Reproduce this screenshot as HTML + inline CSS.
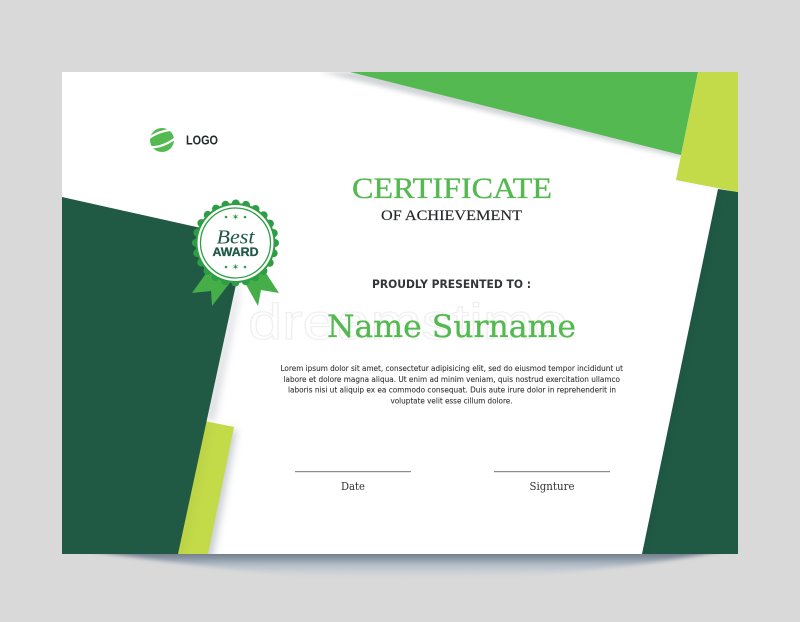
<!DOCTYPE html>
<html><head><meta charset="utf-8"><title>Certificate</title>
<style>html,body{margin:0;padding:0;background:#d9d9d9;width:800px;height:622px;overflow:hidden}svg{display:block}</style>
</head><body>
<svg width="800" height="622" viewBox="0 0 800 622" xmlns="http://www.w3.org/2000/svg">
<defs>
<filter id="b4" x="-30%" y="-30%" width="160%" height="160%"><feGaussianBlur stdDeviation="4"/></filter>
<filter id="b2" x="-30%" y="-30%" width="160%" height="160%"><feGaussianBlur stdDeviation="2.500"/></filter>
<filter id="soft" x="-5%" y="-30%" width="110%" height="160%"><feGaussianBlur stdDeviation="2"/></filter>
<clipPath id="card"><rect x="62" y="72" width="676" height="482"/></clipPath>
<clipPath id="lime"><polygon points="200,421 234,427 208,554 170,554"/></clipPath>
<clipPath id="darkr"><polygon points="718,189 738,192 738,554 642,554"/></clipPath>
<linearGradient id="sh" x1="0" y1="0" x2="0" y2="1">
<stop offset="0" stop-color="#59626e"/><stop offset=".3" stop-color="#83909e"/><stop offset=".55" stop-color="#b4bfc9"/><stop offset=".8" stop-color="#cfd3d7"/><stop offset="1" stop-color="#d9d9d9"/></linearGradient>
</defs>
<rect width="800" height="622" fill="#d9d9d9"/>
<path d="M70 548 C170 562 280 579 400 579 C540 579 660 564 736 548Z" fill="url(#sh)" filter="url(#soft)"/>
<rect x="62" y="72" width="676" height="482" fill="#fff"/>
<g clip-path="url(#card)">
<polygon points="320,72 698,72 681,158" fill="#9aa1a8" opacity=".45" filter="url(#b2)"/>
<polygon points="226,430 237,430 212,560 200,560" fill="#9aa1ac" opacity=".55" filter="url(#b4)"/>
<polygon points="240,270 238,300 214,421 205,421" fill="#9aa1a8" opacity=".4" filter="url(#b4)"/>
<polygon points="676,180 738,192 738,72" fill="#9aa1a8" opacity=".2" filter="url(#b2)"/>
<polygon points="350,72 698,72 681,155" fill="#55b951"/>
<polygon points="718,189 738,192 738,554 642,554" fill="#205a45"/>
<g clip-path="url(#darkr)"><polygon points="718,189 721,189 645,554 642,554" fill="#15493a" opacity=".35" filter="url(#b2)"/></g>
<polygon points="698,72 738,72 738,192 676,180" fill="#c3da49"/>
<polygon points="200,420 234,427 208,554 170,554" fill="#c3da49"/>
<g clip-path="url(#lime)"><polygon points="206,421 209,421 182,554 179,554" fill="#9cb23c" opacity=".5" filter="url(#b4)"/></g>
<polygon points="62,197 246,238 178,554 62,554" fill="#205a45"/>
</g>
<!-- watermark -->
<text x="248" y="339" font-family="'Liberation Sans',sans-serif" font-size="50" fill="none" stroke="#f0f0f0" stroke-width="1.200" textLength="320" lengthAdjust="spacingAndGlyphs">dreamstime</text>
<!-- logo -->
<circle cx="162" cy="140" r="12" fill="#55b951"/>
<path d="M148 139 C155 133 165 130 177 129" fill="none" stroke="#fff" stroke-width="2.200"/>
<path d="M149 147 C158 148 168 144 177 137" fill="none" stroke="#fff" stroke-width="2.200"/>
<path d="M170 127 L177 127 L177 134 C174 132 172 130 170 127Z" fill="#fff"/>
<text x="186" y="144.500" font-family="'Liberation Sans',sans-serif" font-weight="700" font-size="12.500" fill="#22292b" textLength="32" lengthAdjust="spacingAndGlyphs">LOGO</text>
<!-- ribbons -->
<polygon points="207,272 192,293 211,291 212,306 232,280 230,268" fill="#45ae48"/>
<polygon points="244,281 258,306 261,290 279,293 264,270 248,268" fill="#45ae48"/>
<!-- badge -->
<circle cx="235.500" cy="243" r="40" fill="#2e9e45"/>
<circle cx="235.500" cy="243" r="39.500" fill="none" stroke="#2e9e45" stroke-width="8" stroke-linecap="round" stroke-dasharray="0 10.340"/>
<circle cx="235.500" cy="243" r="38" fill="#fff"/>
<circle cx="235.500" cy="243" r="35" fill="none" stroke="#2e9e45" stroke-width="1.300"/>
<g fill="#2e9e45" font-family="'DejaVu Sans',sans-serif" text-anchor="middle">
<text x="235.500" y="220" font-size="9">✶</text><text x="235.500" y="270" font-size="9">✶</text>
<circle cx="226" cy="217" r="1.300"/><circle cx="245" cy="217" r="1.300"/><circle cx="226" cy="267" r="1.300"/><circle cx="245" cy="267" r="1.300"/>
</g>
<text x="235.500" y="243.500" text-anchor="middle" font-family="'Liberation Serif',serif" font-style="italic" font-size="20" fill="#205a45" textLength="38" lengthAdjust="spacingAndGlyphs">Best</text>
<text x="235.500" y="256" text-anchor="middle" font-family="'Liberation Sans',sans-serif" font-weight="700" font-size="11.500" fill="#205a45" stroke="#205a45" stroke-width=".3" textLength="46" lengthAdjust="spacingAndGlyphs">AWARD</text>
<!-- text -->
<text x="352" y="198" font-family="'Liberation Serif',serif" font-size="30" fill="#55b951" stroke="#55b951" stroke-width=".35" textLength="200" lengthAdjust="spacingAndGlyphs">CERTIFICATE</text>
<text x="381" y="220" font-family="'Liberation Serif',serif" font-size="15" fill="#26282a" stroke="#26282a" stroke-width=".15" textLength="141" lengthAdjust="spacingAndGlyphs">OF ACHIEVEMENT</text>
<text x="372" y="288" font-family="'DejaVu Sans',sans-serif" font-weight="700" font-size="11.500" fill="#33373a" textLength="159" lengthAdjust="spacingAndGlyphs">PROUDLY PRESENTED TO :</text>
<text x="327" y="337" font-family="'DejaVu Serif',serif" font-size="31" fill="#55b951" stroke="#55b951" stroke-width=".3" textLength="249" lengthAdjust="spacingAndGlyphs">Name Surname</text>
<g font-family="'DejaVu Sans',sans-serif" font-size="8.300" fill="#333" stroke="#333" stroke-width=".1">
<text x="280.500" y="371" textLength="342.500" lengthAdjust="spacingAndGlyphs">Lorem ipsum dolor sit amet, consectetur adipisicing elit, sed do eiusmod tempor incididunt ut</text>
<text x="283.500" y="382" textLength="336.500" lengthAdjust="spacingAndGlyphs">labore et dolore magna aliqua. Ut enim ad minim veniam, quis nostrud exercitation ullamco</text>
<text x="288" y="392.500" textLength="328" lengthAdjust="spacingAndGlyphs">laboris nisi ut aliquip ex ea commodo consequat. Duis aute irure dolor in reprehenderit in</text>
<text x="390.500" y="403.500" textLength="122" lengthAdjust="spacingAndGlyphs">voluptate velit esse cillum dolore.</text>
</g>
<rect x="295" y="471" width="116" height="1.200" fill="#8c8c8c"/>
<rect x="494" y="471" width="116" height="1.200" fill="#8c8c8c"/>
<text x="341" y="490" font-family="'DejaVu Serif',serif" font-size="11" fill="#333" textLength="24" lengthAdjust="spacingAndGlyphs">Date</text>
<text x="529.500" y="490" font-family="'DejaVu Serif',serif" font-size="11" fill="#333" textLength="45" lengthAdjust="spacingAndGlyphs">Signture</text>
</svg>
</body></html>
